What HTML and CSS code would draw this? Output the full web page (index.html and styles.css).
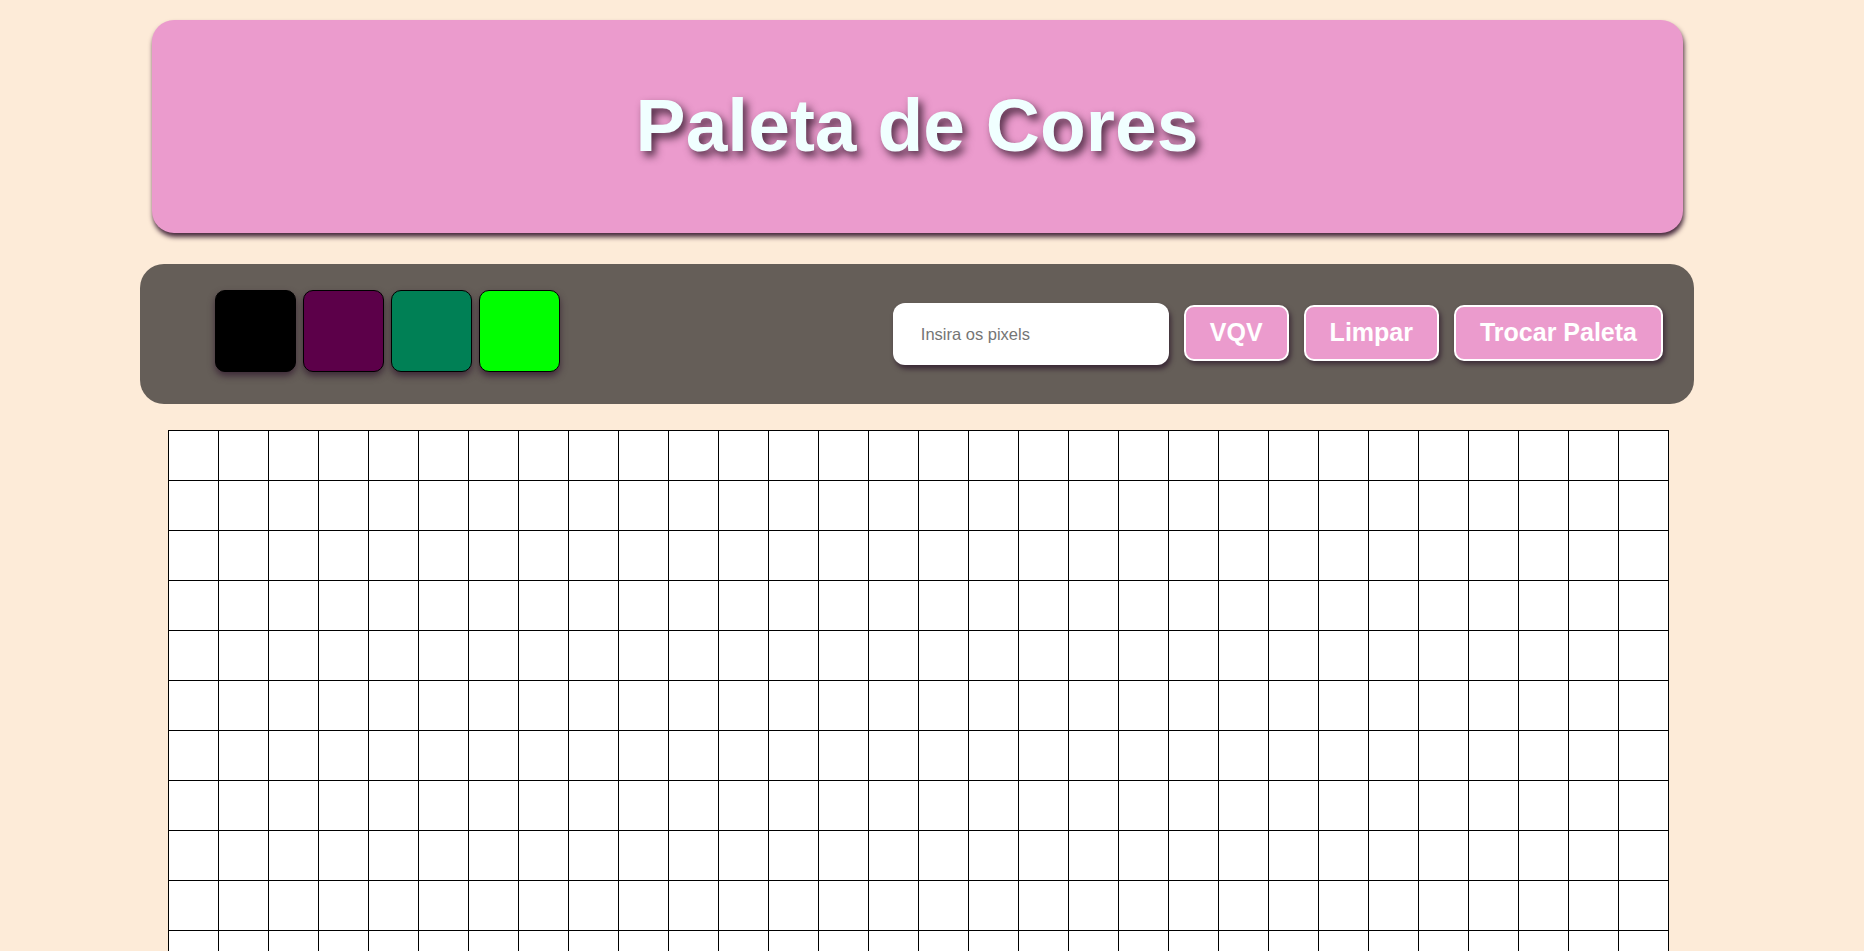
FILE: index.html
```html
<!DOCTYPE html>
<html lang="pt-BR">
<head>
<meta charset="utf-8">
<title>Paleta de Cores</title>
<link rel="stylesheet" href="styles.css">
</head>
<body>
<main class="page">
  <header class="header">
    <h1 class="title">Paleta de Cores</h1>
  </header>
  <section class="toolbar">
    <div class="palette">
      <div class="color black"></div>
      <div class="color purple"></div>
      <div class="color green"></div>
      <div class="color lime"></div>
    </div>
    <div class="controls">
      <input class="board-input" type="number" placeholder="Insira os pixels">
      <button class="btn">VQV</button>
      <button class="btn">Limpar</button>
      <button class="btn">Trocar Paleta</button>
    </div>
  </section>
  <section class="board">
    <div class="pixel"></div><div class="pixel"></div><div class="pixel"></div><div class="pixel"></div><div class="pixel"></div><div class="pixel"></div><div class="pixel"></div><div class="pixel"></div><div class="pixel"></div><div class="pixel"></div><div class="pixel"></div><div class="pixel"></div><div class="pixel"></div><div class="pixel"></div><div class="pixel"></div><div class="pixel"></div><div class="pixel"></div><div class="pixel"></div><div class="pixel"></div><div class="pixel"></div><div class="pixel"></div><div class="pixel"></div><div class="pixel"></div><div class="pixel"></div><div class="pixel"></div><div class="pixel"></div><div class="pixel"></div><div class="pixel"></div><div class="pixel"></div><div class="pixel"></div>
    <div class="pixel"></div><div class="pixel"></div><div class="pixel"></div><div class="pixel"></div><div class="pixel"></div><div class="pixel"></div><div class="pixel"></div><div class="pixel"></div><div class="pixel"></div><div class="pixel"></div><div class="pixel"></div><div class="pixel"></div><div class="pixel"></div><div class="pixel"></div><div class="pixel"></div><div class="pixel"></div><div class="pixel"></div><div class="pixel"></div><div class="pixel"></div><div class="pixel"></div><div class="pixel"></div><div class="pixel"></div><div class="pixel"></div><div class="pixel"></div><div class="pixel"></div><div class="pixel"></div><div class="pixel"></div><div class="pixel"></div><div class="pixel"></div><div class="pixel"></div>
    <div class="pixel"></div><div class="pixel"></div><div class="pixel"></div><div class="pixel"></div><div class="pixel"></div><div class="pixel"></div><div class="pixel"></div><div class="pixel"></div><div class="pixel"></div><div class="pixel"></div><div class="pixel"></div><div class="pixel"></div><div class="pixel"></div><div class="pixel"></div><div class="pixel"></div><div class="pixel"></div><div class="pixel"></div><div class="pixel"></div><div class="pixel"></div><div class="pixel"></div><div class="pixel"></div><div class="pixel"></div><div class="pixel"></div><div class="pixel"></div><div class="pixel"></div><div class="pixel"></div><div class="pixel"></div><div class="pixel"></div><div class="pixel"></div><div class="pixel"></div>
    <div class="pixel"></div><div class="pixel"></div><div class="pixel"></div><div class="pixel"></div><div class="pixel"></div><div class="pixel"></div><div class="pixel"></div><div class="pixel"></div><div class="pixel"></div><div class="pixel"></div><div class="pixel"></div><div class="pixel"></div><div class="pixel"></div><div class="pixel"></div><div class="pixel"></div><div class="pixel"></div><div class="pixel"></div><div class="pixel"></div><div class="pixel"></div><div class="pixel"></div><div class="pixel"></div><div class="pixel"></div><div class="pixel"></div><div class="pixel"></div><div class="pixel"></div><div class="pixel"></div><div class="pixel"></div><div class="pixel"></div><div class="pixel"></div><div class="pixel"></div>
    <div class="pixel"></div><div class="pixel"></div><div class="pixel"></div><div class="pixel"></div><div class="pixel"></div><div class="pixel"></div><div class="pixel"></div><div class="pixel"></div><div class="pixel"></div><div class="pixel"></div><div class="pixel"></div><div class="pixel"></div><div class="pixel"></div><div class="pixel"></div><div class="pixel"></div><div class="pixel"></div><div class="pixel"></div><div class="pixel"></div><div class="pixel"></div><div class="pixel"></div><div class="pixel"></div><div class="pixel"></div><div class="pixel"></div><div class="pixel"></div><div class="pixel"></div><div class="pixel"></div><div class="pixel"></div><div class="pixel"></div><div class="pixel"></div><div class="pixel"></div>
    <div class="pixel"></div><div class="pixel"></div><div class="pixel"></div><div class="pixel"></div><div class="pixel"></div><div class="pixel"></div><div class="pixel"></div><div class="pixel"></div><div class="pixel"></div><div class="pixel"></div><div class="pixel"></div><div class="pixel"></div><div class="pixel"></div><div class="pixel"></div><div class="pixel"></div><div class="pixel"></div><div class="pixel"></div><div class="pixel"></div><div class="pixel"></div><div class="pixel"></div><div class="pixel"></div><div class="pixel"></div><div class="pixel"></div><div class="pixel"></div><div class="pixel"></div><div class="pixel"></div><div class="pixel"></div><div class="pixel"></div><div class="pixel"></div><div class="pixel"></div>
    <div class="pixel"></div><div class="pixel"></div><div class="pixel"></div><div class="pixel"></div><div class="pixel"></div><div class="pixel"></div><div class="pixel"></div><div class="pixel"></div><div class="pixel"></div><div class="pixel"></div><div class="pixel"></div><div class="pixel"></div><div class="pixel"></div><div class="pixel"></div><div class="pixel"></div><div class="pixel"></div><div class="pixel"></div><div class="pixel"></div><div class="pixel"></div><div class="pixel"></div><div class="pixel"></div><div class="pixel"></div><div class="pixel"></div><div class="pixel"></div><div class="pixel"></div><div class="pixel"></div><div class="pixel"></div><div class="pixel"></div><div class="pixel"></div><div class="pixel"></div>
    <div class="pixel"></div><div class="pixel"></div><div class="pixel"></div><div class="pixel"></div><div class="pixel"></div><div class="pixel"></div><div class="pixel"></div><div class="pixel"></div><div class="pixel"></div><div class="pixel"></div><div class="pixel"></div><div class="pixel"></div><div class="pixel"></div><div class="pixel"></div><div class="pixel"></div><div class="pixel"></div><div class="pixel"></div><div class="pixel"></div><div class="pixel"></div><div class="pixel"></div><div class="pixel"></div><div class="pixel"></div><div class="pixel"></div><div class="pixel"></div><div class="pixel"></div><div class="pixel"></div><div class="pixel"></div><div class="pixel"></div><div class="pixel"></div><div class="pixel"></div>
    <div class="pixel"></div><div class="pixel"></div><div class="pixel"></div><div class="pixel"></div><div class="pixel"></div><div class="pixel"></div><div class="pixel"></div><div class="pixel"></div><div class="pixel"></div><div class="pixel"></div><div class="pixel"></div><div class="pixel"></div><div class="pixel"></div><div class="pixel"></div><div class="pixel"></div><div class="pixel"></div><div class="pixel"></div><div class="pixel"></div><div class="pixel"></div><div class="pixel"></div><div class="pixel"></div><div class="pixel"></div><div class="pixel"></div><div class="pixel"></div><div class="pixel"></div><div class="pixel"></div><div class="pixel"></div><div class="pixel"></div><div class="pixel"></div><div class="pixel"></div>
    <div class="pixel"></div><div class="pixel"></div><div class="pixel"></div><div class="pixel"></div><div class="pixel"></div><div class="pixel"></div><div class="pixel"></div><div class="pixel"></div><div class="pixel"></div><div class="pixel"></div><div class="pixel"></div><div class="pixel"></div><div class="pixel"></div><div class="pixel"></div><div class="pixel"></div><div class="pixel"></div><div class="pixel"></div><div class="pixel"></div><div class="pixel"></div><div class="pixel"></div><div class="pixel"></div><div class="pixel"></div><div class="pixel"></div><div class="pixel"></div><div class="pixel"></div><div class="pixel"></div><div class="pixel"></div><div class="pixel"></div><div class="pixel"></div><div class="pixel"></div>
    <div class="pixel"></div><div class="pixel"></div><div class="pixel"></div><div class="pixel"></div><div class="pixel"></div><div class="pixel"></div><div class="pixel"></div><div class="pixel"></div><div class="pixel"></div><div class="pixel"></div><div class="pixel"></div><div class="pixel"></div><div class="pixel"></div><div class="pixel"></div><div class="pixel"></div><div class="pixel"></div><div class="pixel"></div><div class="pixel"></div><div class="pixel"></div><div class="pixel"></div><div class="pixel"></div><div class="pixel"></div><div class="pixel"></div><div class="pixel"></div><div class="pixel"></div><div class="pixel"></div><div class="pixel"></div><div class="pixel"></div><div class="pixel"></div><div class="pixel"></div>
    <div class="pixel"></div><div class="pixel"></div><div class="pixel"></div><div class="pixel"></div><div class="pixel"></div><div class="pixel"></div><div class="pixel"></div><div class="pixel"></div><div class="pixel"></div><div class="pixel"></div><div class="pixel"></div><div class="pixel"></div><div class="pixel"></div><div class="pixel"></div><div class="pixel"></div><div class="pixel"></div><div class="pixel"></div><div class="pixel"></div><div class="pixel"></div><div class="pixel"></div><div class="pixel"></div><div class="pixel"></div><div class="pixel"></div><div class="pixel"></div><div class="pixel"></div><div class="pixel"></div><div class="pixel"></div><div class="pixel"></div><div class="pixel"></div><div class="pixel"></div>
  </section>
</main>
</body>
</html>
```

FILE: styles.css
```css
* {
  box-sizing: border-box;
}

html, body {
  margin: 0;
  padding: 0;
}

body {
  background: #fdebd8;
  font-family: "Liberation Sans", Arial, sans-serif;
  overflow: hidden;
}

.page {
  width: 1554px;
  margin-left: 140px;
  padding-top: 20px;
  display: flex;
  flex-direction: column;
  align-items: center;
}

.header {
  width: 1531px;
  height: 213px;
  background: #eb9bcd;
  border-radius: 22px;
  box-shadow: 1px 4px 5px #45283b;
  display: flex;
  align-items: center;
  justify-content: center;
}

.title {
  margin: 0;
  font-size: 75px;
  font-weight: 700;
  color: #f0ffff;
  text-shadow: 4px 5px 8px #4d2a42;
  padding-bottom: 4px;
}

.toolbar {
  width: 1554px;
  height: 140px;
  margin-top: 31px;
  background: #655e58;
  border-radius: 24px;
  display: flex;
  align-items: center;
  justify-content: space-between;
  padding: 0 31px 0 75px;
}

.palette {
  display: flex;
  gap: 7px;
  margin-top: -6px;
}

.color {
  width: 81px;
  height: 82px;
  border: 1px solid #000;
  border-radius: 10px;
  box-shadow: 0 4px 7px #3e2a38;
}

.black { background: #000000; }
.purple { background: #5c0049; }
.green { background: #008055; }
.lime { background: #00ff00; }

.controls {
  display: flex;
  align-items: center;
  gap: 15px;
}

.board-input {
  width: 276px;
  height: 62px;
  border: none;
  border-radius: 12px;
  background: #fff;
  padding: 0 28px;
  font-family: "Liberation Sans", Arial, sans-serif;
  font-size: 16.5px;
  box-shadow: 2px 4px 5px #3b2a36;
  outline: none;
}

.board-input::placeholder {
  color: #757575;
}

.btn {
  height: 56px;
  padding: 0 24px;
  background: #eb9bcd;
  color: #fff;
  border: 2px solid #fff;
  border-radius: 10px;
  font-family: "Liberation Sans", Arial, sans-serif;
  font-size: 25px;
  font-weight: 700;
  box-shadow: 2px 3px 5px #3b2a36;
  margin-top: -3px;
}

.board {
  margin-top: 26px;
  margin-left: 3px;
  display: grid;
  grid-template-columns: repeat(30, 50px);
  border-top: 1px solid #000;
  border-left: 1px solid #000;
  width: 1501px;
}

.pixel {
  width: 50px;
  height: 50px;
  background: #fff;
  border-right: 1px solid #000;
  border-bottom: 1px solid #000;
}
```
